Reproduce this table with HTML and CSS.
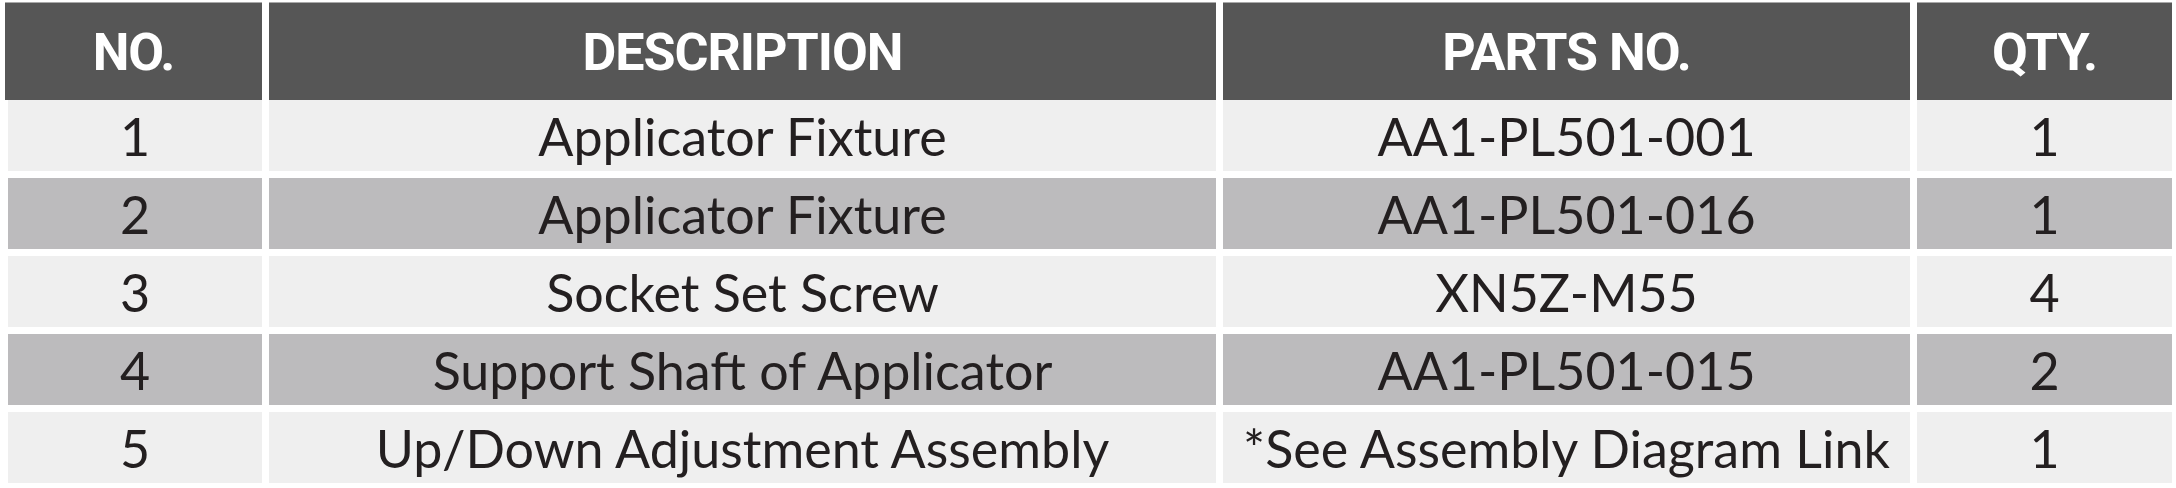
FILE: index.html
```html
<!DOCTYPE html>
<html>
<head>
<meta charset="utf-8">
<link rel="stylesheet" href="styles.css">
</head>
<body>
<div class="parts">
  <div class="row head">
    <div class="cell first">NO.</div>
    <div class="cell">DESCRIPTION</div>
    <div class="cell">PARTS NO.</div>
    <div class="cell">QTY.</div>
  </div>
  <div class="row light">
    <div class="cell">1</div>
    <div class="cell">Applicator Fixture</div>
    <div class="cell">AA1-PL501-001</div>
    <div class="cell">1</div>
  </div>
  <div class="row dark">
    <div class="cell">2</div>
    <div class="cell">Applicator Fixture</div>
    <div class="cell">AA1-PL501-016</div>
    <div class="cell">1</div>
  </div>
  <div class="row light">
    <div class="cell">3</div>
    <div class="cell">Socket Set Screw</div>
    <div class="cell">XN5Z-M55</div>
    <div class="cell">4</div>
  </div>
  <div class="row dark">
    <div class="cell">4</div>
    <div class="cell">Support Shaft of Applicator</div>
    <div class="cell">AA1-PL501-015</div>
    <div class="cell">2</div>
  </div>
  <div class="row light">
    <div class="cell">5</div>
    <div class="cell">Up/Down Adjustment Assembly</div>
    <div class="cell">*See Assembly Diagram Link</div>
    <div class="cell">1</div>
  </div>
</div>
</body>
</html>
```

FILE: styles.css
```css
html, body {
  margin: 0;
  padding: 0;
  background: #ffffff;
}

.parts {
  padding: 2px 0 0 8px;
  display: flex;
  flex-direction: column;
  gap: 7px;
  width: 2164px;
}

.row {
  display: grid;
  grid-template-columns: 254px 947px 687px 255px;
  column-gap: 7px;
  height: 71px;
}

.cell {
  display: flex;
  align-items: center;
  justify-content: center;
  font-family: Lato, "Liberation Sans", sans-serif;
  font-size: 52px;
  color: #231f20;
  white-space: nowrap;
}

.head {
  height: 98px;
  margin-bottom: -7px;
}

.head .cell {
  background: #565656;
  border-top: 1px solid #a9a9a9;
  color: #ffffff;
  font-family: Roboto, "Liberation Sans", sans-serif;
  font-weight: 700;
  font-size: 52px;
  letter-spacing: -1px;
  padding-top: 2px;
  box-sizing: border-box;
}

.head .first {
  margin-left: -3px;
}

.light .cell {
  background: #efefef;
}

.dark .cell {
  background: #bcbbbd;
}
```
